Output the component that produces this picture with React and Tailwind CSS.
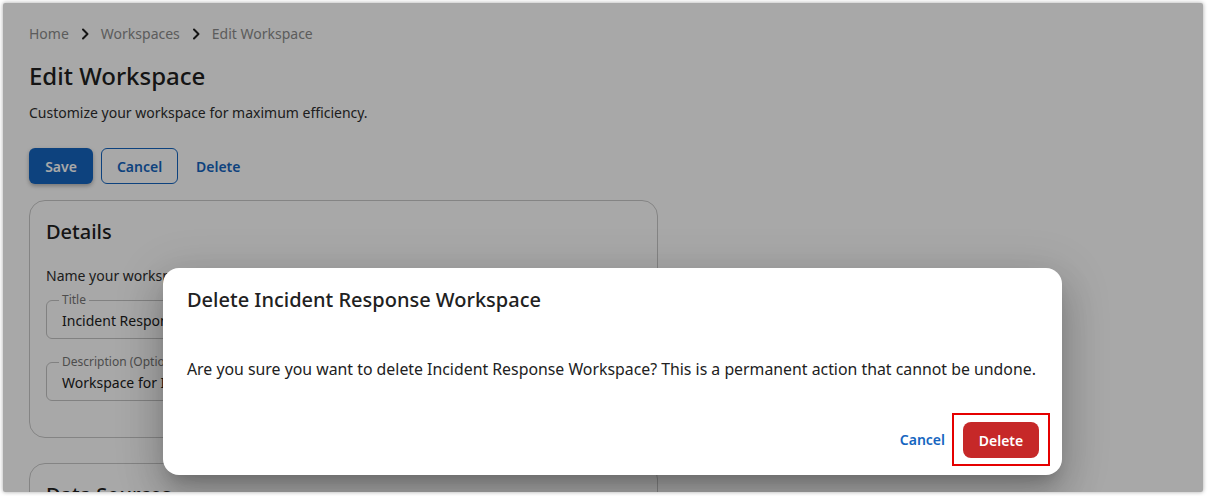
import React from "react";

function Chevron() {
  return (
    <svg width="16" height="16" viewBox="0 0 16 16" fill="none" className="shrink-0">
      <path d="M6 3.5 10.5 8 6 12.5" stroke="#1f1f1f" strokeWidth="2" strokeLinecap="round" strokeLinejoin="round" />
    </svg>
  );
}

function OutlinedField({ label, value }) {
  return (
    <div className="relative h-[39px] rounded-[6px] border border-[#c4c4c4]">
      <span className="absolute -top-[9px] left-[12px] bg-white px-[3px] text-[12px] leading-[16px] text-[#757575]">
        {label}
      </span>
      <div className="flex h-full items-center whitespace-nowrap px-[15px] pt-[1px] text-[14px] text-[#212121]">
        {value}
      </div>
    </div>
  );
}

export default function App() {
  return (
    <div className="min-h-screen bg-white p-[3px] font-['Noto_Sans',sans-serif]">
      <div className="relative h-[489px] w-[1200px] overflow-hidden rounded-[2px] bg-white shadow-[0_0_4px_rgba(0,0,0,0.35)]">
        {/* page content */}
        <div className="px-[26px] pt-[21px]">
          <nav className="flex h-5 items-center gap-2 text-[14px] leading-5 text-[#8c8c8c]">
            <span>Home</span>
            <Chevron />
            <span>Workspaces</span>
            <Chevron />
            <span>Edit Workspace</span>
          </nav>
          <h1 className="mt-4 text-[24px] font-medium leading-8 text-[#212121]">Edit Workspace</h1>
          <p className="mt-[11px] text-[14px] leading-5 text-[#2e2e2e]">Customize your workspace for maximum efficiency.</p>
          <div className="mt-[25px] flex h-9 items-center gap-2">
            <button className="h-9 w-[64px] rounded-[6px] bg-[#1565c0] text-[14px] font-semibold text-white shadow-[0_2px_4px_rgba(0,0,0,0.3)]">
              Save
            </button>
            <button className="h-9 w-[77px] rounded-[6px] border border-[#1565c0] text-[14px] font-semibold text-[#1565c0]">
              Cancel
            </button>
            <button className="h-9 px-[10px] text-[14px] font-semibold text-[#1565c0]">Delete</button>
          </div>
          <section className="mt-4 h-[238px] w-[629px] rounded-[16px] border border-[#c9c9c9] px-4 pt-[17px]">
            <h2 className="text-[20px] font-medium leading-7 text-[#212121]">Details</h2>
            <p className="mt-5 text-[14px] leading-5 text-[#2e2e2e]">Name your workspace</p>
            <div className="mt-[14px]">
              <OutlinedField label="Title" value="Incident Response Workspace" />
            </div>
            <div className="mt-[23px]">
              <OutlinedField label="Description (Optional)" value="Workspace for Incident Response" />
            </div>
          </section>
          <section className="mt-[25px] h-[200px] w-[629px] rounded-[16px] border border-[#c9c9c9] px-4 pt-[17px]">
            <h2 className="text-[20px] font-medium leading-7 text-[#212121]">Data Sources</h2>
          </section>
        </div>

        {/* modal backdrop */}
        <div className="absolute inset-0 bg-black/[0.34]" />

        {/* dialog */}
        <div className="absolute left-[160px] top-[265px] flex h-[207px] w-[899px] flex-col rounded-[16px] bg-white px-6 shadow-[0_11px_15px_-7px_rgba(0,0,0,0.2),0_24px_38px_3px_rgba(0,0,0,0.14),0_9px_46px_8px_rgba(0,0,0,0.12)]">
          <h2 className="mt-[18px] text-[20px] font-medium leading-7 text-[#212121]">
            Delete Incident Response Workspace
          </h2>
          <p className="mt-[44px] whitespace-nowrap text-[15.85px] leading-[22px] text-[#212121]">
            Are you sure you want to delete Incident Response Workspace? This is a permanent action that cannot be undone.
          </p>
          <div className="mt-[33px] -mr-3 flex items-center justify-end gap-[7px]">
            <button className="text-[14px] font-semibold text-[#1565c0]">Cancel</button>
            <div className="border-2 border-[#e50000] px-[9px] pb-[6px] pt-[7px]">
              <button className="h-9 w-[76px] rounded-[8px] bg-[#c62828] text-[14px] font-semibold text-white">
                Delete
              </button>
            </div>
          </div>
        </div>
      </div>
    </div>
  );
}
